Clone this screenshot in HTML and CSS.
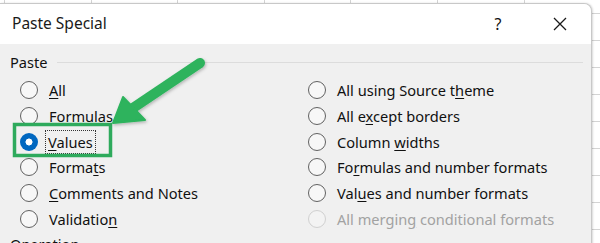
FILE: index.html
```html
<!DOCTYPE html>
<html>
<head>
<meta charset="utf-8">
<link rel="stylesheet" href="styles.css">
</head>
<body>
<div class="dialog">
  <div class="titlebar">
    <div class="title">Paste Special</div>
    <div class="tb-btn help">?</div>
    <div class="tb-btn close">
      <svg width="14" height="14" viewBox="0 0 14 14"><path d="M1 1 L13 13 M13 1 L1 13" stroke="#1a1a1a" stroke-width="1.3" fill="none"/></svg>
    </div>
  </div>
  <div class="content">
    <div class="group-label"><span>Paste</span><span class="rule"></span></div>
    <div class="options">
      <div class="opt"><span class="radio"></span><span class="lbl"><u>A</u>ll</span></div>
      <div class="opt"><span class="radio"></span><span class="lbl">All using Source t<u>h</u>eme</span></div>
      <div class="opt"><span class="radio"></span><span class="lbl"><u>F</u>ormulas</span></div>
      <div class="opt"><span class="radio"></span><span class="lbl">All e<u>x</u>cept borders</span></div>
      <div class="opt"><span class="radio checked"></span><span class="lbl focus"><u>V</u>alues</span></div>
      <div class="opt"><span class="radio"></span><span class="lbl">Column <u>w</u>idths</span></div>
      <div class="opt"><span class="radio"></span><span class="lbl">Forma<u>t</u>s</span></div>
      <div class="opt"><span class="radio"></span><span class="lbl">Fo<u>r</u>mulas and number formats</span></div>
      <div class="opt"><span class="radio"></span><span class="lbl"><u>C</u>omments and Notes</span></div>
      <div class="opt"><span class="radio"></span><span class="lbl">Val<u>u</u>es and number formats</span></div>
      <div class="opt"><span class="radio"></span><span class="lbl">Validatio<u>n</u></span></div>
      <div class="opt disabled"><span class="radio"></span><span class="lbl">All mergin<u>g</u> conditional formats</span></div>
    </div>
    <div class="group-label op"><span>Operation</span><span class="rule"></span></div>
  </div>
</div>
<svg class="annot" width="600" height="243" viewBox="0 0 600 243">
  <defs>
    <filter id="sh" x="-20%" y="-20%" width="140%" height="140%">
      <feDropShadow dx="1" dy="1.5" stdDeviation="1.5" flood-color="#000" flood-opacity="0.25"/>
    </filter>
  </defs>
  <rect x="14.5" y="124.5" width="96" height="31" fill="none" stroke="#2eaa5c" stroke-width="3.5"/>
  <g filter="url(#sh)" fill="#2db35d" stroke="#2db35d">
    <line x1="200" y1="63" x2="133" y2="108" stroke-width="10" stroke-linecap="round"/>
    <polygon points="113,123 123,97 145,120" stroke-width="2" stroke-linejoin="round"/>
  </g>
</svg>
</body>
</html>
```
FILE: styles.css
```css
html, body {
  margin: 0;
  padding: 0;
}
body {
  width: 600px;
  height: 243px;
  overflow: hidden;
  position: relative;
  font-family: "Noto Sans", "Open Sans", sans-serif;
  color: #111;
  background-color: #fff;
  background-image:
    repeating-linear-gradient(to right, transparent 0 4px, #d4d4d4 4px 5px, transparent 5px 86.6px),
    repeating-linear-gradient(to bottom, transparent 0 13px, #d4d4d4 13px 14px, transparent 14px 27px);
}
.dialog {
  margin-top: 3px;
  width: 591px;
  height: 260px;
  border: 1px solid #c8c8c8;
  border-left: none;
  border-radius: 0 8px 0 0;
  background: #f0f0f0;
  box-shadow: 1px 0 2px rgba(0,0,0,0.15);
  overflow: hidden;
}
.titlebar {
  height: 40px;
  background: #fff;
  display: flex;
  align-items: center;
  padding-left: 12px;
}
.title {
  flex: 1;
  font-size: 15.5px;
  color: #1a1a1a;
  margin-top: -2px;
}
.tb-btn {
  display: flex;
  align-items: center;
  justify-content: center;
  height: 30px;
}
.help {
  width: 20px;
  font-size: 16px;
  margin-right: 42px;
}
.close {
  width: 20px;
  margin-right: 21px;
}
.content {
  padding: 8px 0 0 10px;
}
.group-label {
  display: flex;
  align-items: center;
  font-size: 14.6px;
  height: 20px;
}
.group-label .rule {
  flex: 1;
  height: 1px;
  background: #dcdcdc;
  margin: 0 8px 0 9px;
}
.group-label.op {
  margin-top: 2px;
}
.options {
  display: grid;
  grid-template-columns: 288px 1fr;
  grid-template-rows: repeat(6, 25.7px);
  padding-left: 10px;
  margin-top: 5.5px;
}
.opt {
  display: flex;
  align-items: center;
  font-size: 14.6px;
}
.radio {
  box-sizing: border-box;
  width: 18px;
  height: 18px;
  border: 1.6px solid #616161;
  border-radius: 50%;
  margin-right: 11px;
  flex: none;
  background: #f7f7f7;
}
.radio.checked {
  border: none;
  background: radial-gradient(circle, #fff 0 3.2px, #0067c0 3.8px);
}
.disabled .radio {
  border-color: #d0d0d0;
  background: #f3f3f3;
}
.disabled .lbl {
  color: #a2a2a2;
}
.lbl u {
  text-underline-offset: 2px;
}
.lbl.focus {
  outline: 1px dotted #333;
  outline-offset: 0;
  padding: 1px 2px;
  margin-left: -3px;
  line-height: 20px;
}
.annot {
  position: absolute;
  left: 0;
  top: 0;
  pointer-events: none;
}
```
